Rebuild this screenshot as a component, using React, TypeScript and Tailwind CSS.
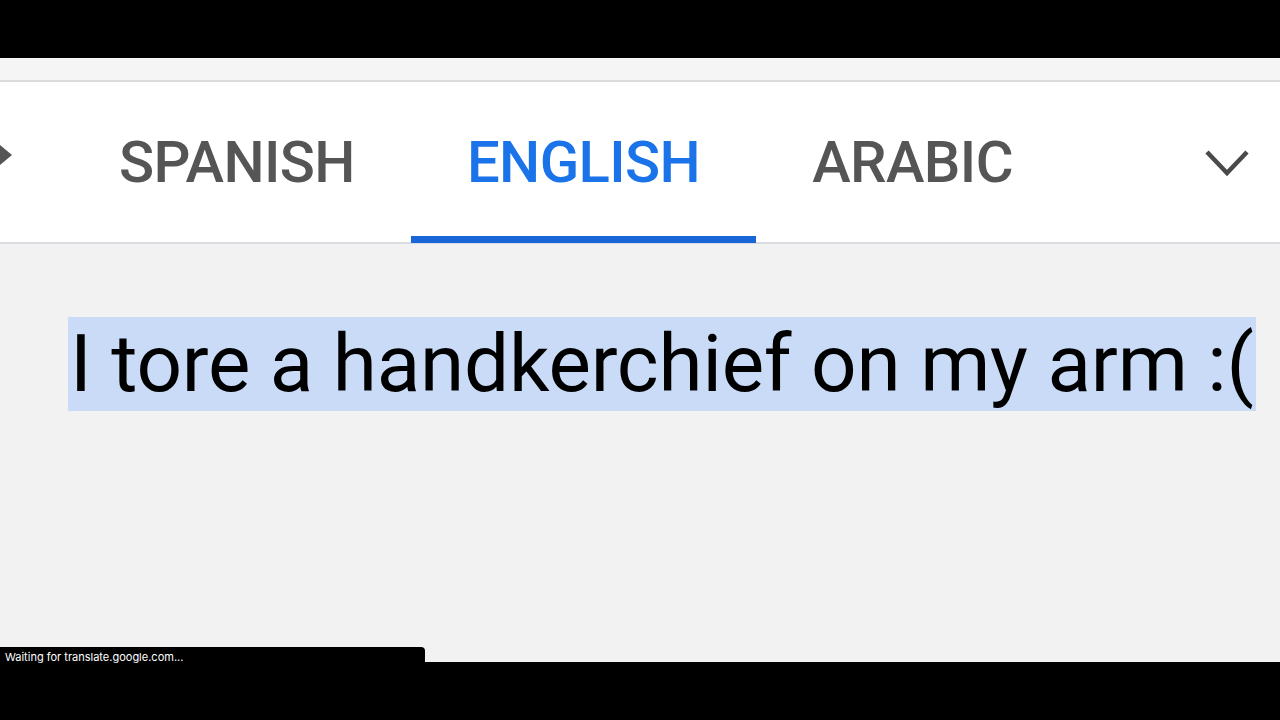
export default function App() {
  const tabs = [
    { label: "SPANISH", active: false },
    { label: "ENGLISH", active: true },
    { label: "ARABIC", active: false },
  ];

  return (
    <div className="relative w-[1280px] h-[720px] flex flex-col bg-black overflow-hidden" style={{ fontFamily: "Roboto, 'Noto Sans', sans-serif" }}>
      <div className="h-[58px] bg-black" />
      <div className="h-[24px] bg-[#f5f5f5] border-b-2 border-[#dcdcdc]" />

      {/* language tabs */}
      <div className="h-[162px] bg-white border-b-2 border-[#dadce0] flex items-stretch relative">
        <div className="w-[63px] flex items-center -mt-[14px]">
          <svg width="12" height="24" viewBox="0 0 12 24">
            <path d="M0 2 L12 12 L0 22 Z" fill="#555" />
          </svg>
        </div>
        {tabs.map((t) => (
          <div
            key={t.label}
            className={
              "relative flex items-center px-[56px] text-[58px] leading-none font-medium tracking-[-0.6px] -mb-[2px] " +
              (t.active ? "text-[#1a73e8]" : "text-[#555555]")
            }
          >
            <span className="-mt-[3px]">{t.label}</span>
            {t.active && <div className="absolute left-0 right-0 bottom-[1px] h-[7px] bg-[#1a66d9]" />}
          </div>
        ))}
        <div className="flex-1" />
        <div className="w-[107px] flex items-center justify-center mt-[3px]">
          <svg width="46" height="30" viewBox="0 0 46 30">
            <path d="M3 3 L23 24 L43 3" fill="none" stroke="#4a4a4a" strokeWidth="4.5" />
          </svg>
        </div>
      </div>

      {/* translated text */}
      <div className="h-[418px] bg-[#f2f2f2] pt-[73px] pl-[68px]">
        <span className="inline-block whitespace-nowrap bg-[#c9dbf7] text-black text-[80px] leading-[94px] tracking-[-0.2px] pl-[2px] pr-[2px]">
          I tore a handkerchief on my arm :(
        </span>
      </div>

      <div className="flex-1 bg-black" />

      {/* status bubble */}
      <div
        className="absolute left-0 top-[647px] w-[425px] h-[20px] bg-black rounded-tr-[4px] text-white text-[11px] pl-[5px] pt-[2px]"
        style={{ fontFamily: "Inter, 'Liberation Sans', sans-serif" }}
      >
        Waiting for translate.google.com...
      </div>
    </div>
  );
}
